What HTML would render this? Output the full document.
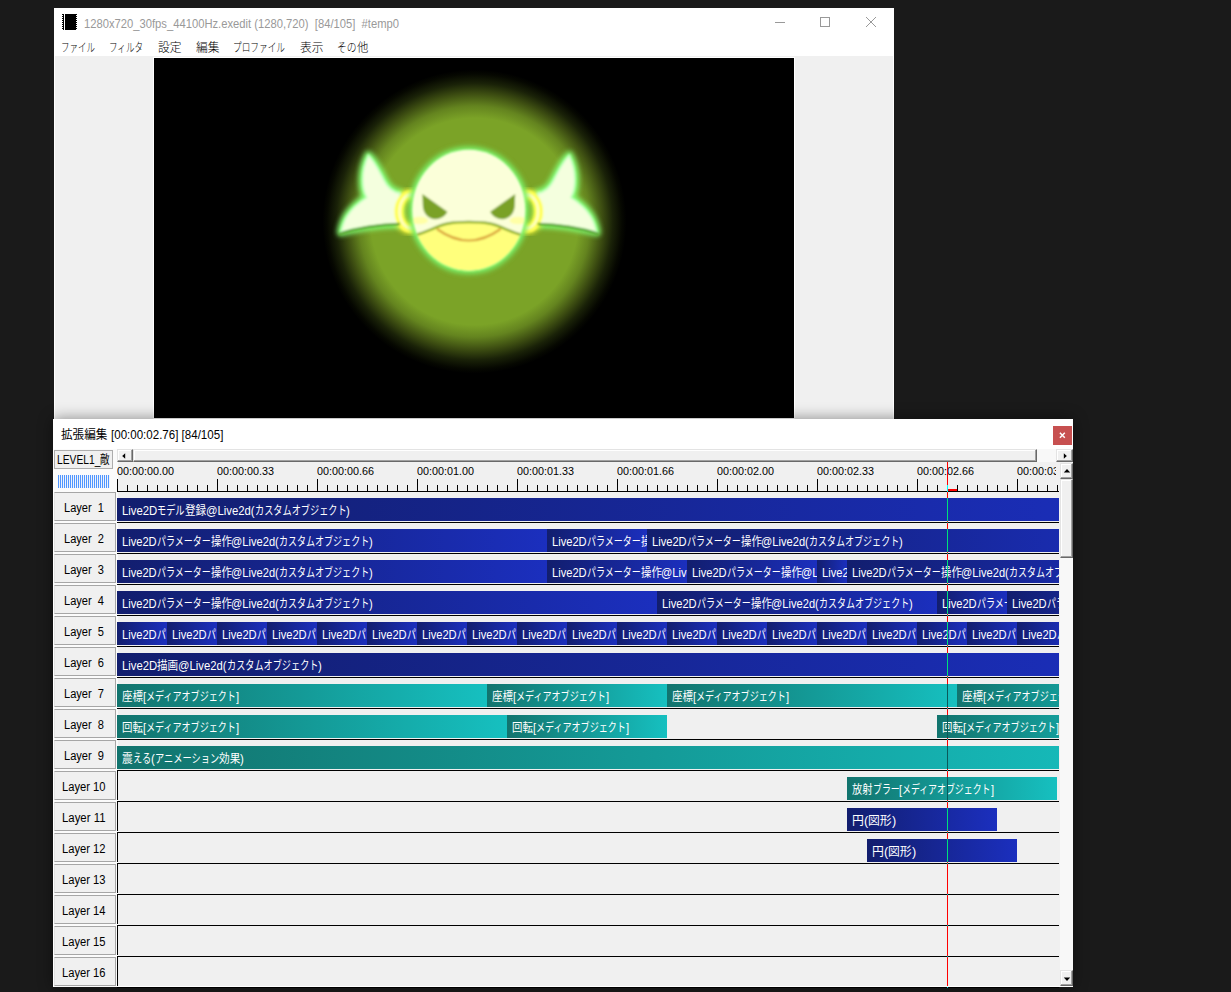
<!DOCTYPE html>
<html lang="ja"><head><meta charset="utf-8"><title>AviUtl</title>
<style>
html,body{margin:0;padding:0}
body{width:1231px;height:992px;background:#1a1a1a;position:relative;overflow:hidden;
 font-family:"Liberation Sans","Noto Sans CJK JP",sans-serif;font-size:12px;color:#000}
div,span,svg{position:absolute;box-sizing:border-box}
.fit{position:relative;display:inline-block;transform-origin:0 50%;white-space:pre}
.t{white-space:pre;line-height:16px;height:16px}
#w1{left:54px;top:8px;width:840px;height:420px;background:#f0f0f0;border-left:1px solid #fff;border-right:1px solid #fff}
#w1 .cap{left:0;top:0;width:840px;height:48px;background:#fff}
#w1 .title{left:30px;top:8px;color:#999}
.menu{top:32px;color:#000;font-weight:300}
#vid{left:100px;top:50px;width:640px;height:360px;background:#000;overflow:hidden;box-shadow:0 0 0 1px #fff}
#w2{left:53px;top:419px;width:1020px;height:568px;background:#fff;box-shadow:0 0 14px rgba(0,0,0,.45)}
#w2 .body{left:1px;top:30px;width:1019px;height:537px;background:#f0f0f0}
#w2 .title{left:8px;top:8px}
#close{left:1000px;top:7px;width:19px;height:19px;background:#c75050}
.lbl{left:1px;width:62px;height:29px;background:#f0f0f0;border:1px solid #a6a6a6;border-left-color:#e3e3e3;text-align:center}
.lbl .t{left:-1px;width:60px;top:7px;text-align:center}
.lcol{left:1px;top:30px;width:64px;height:538px;background:#fbfbfb}
.btn3{background:#f0f0f0;border:1px solid;border-color:#e3e3e3 #696969 #696969 #e3e3e3;box-shadow:inset -1px -1px 0 #a0a0a0, inset 1px 1px 0 #fff}
.chk{background:#f8f8f8}
.row{left:64px;width:942px;height:31px}
.sep{left:0;top:30px;width:942px;height:1px;background:#000}
.obj{top:6px;height:23px;overflow:hidden;color:#fff}
.obj .t{left:5px;top:5px}
.b{background:linear-gradient(90deg,#121e6e,#1b2fbe)}
.g{background:linear-gradient(90deg,#12746e,#16c0c0)}
.tick{width:1px;background:#000}
.tl{top:46px;font-size:11px}
</style></head><body>

<div id="w1"><div id="w1i" style="left:-1px;top:0;width:840px;height:420px"><div class="cap"></div>
<svg style="left:8px;top:6px" width="15" height="16" viewBox="0 0 15 16"><rect x="0" y="0" width="2" height="16" fill="#000"/><rect x="3" y="0" width="12" height="16" fill="#000"/><rect x="0" y="1" width="1" height="1" fill="#fff"/><rect x="14" y="1" width="1" height="1" fill="#fff"/><rect x="0" y="3" width="1" height="1" fill="#fff"/><rect x="14" y="3" width="1" height="1" fill="#fff"/><rect x="0" y="5" width="1" height="1" fill="#fff"/><rect x="14" y="5" width="1" height="1" fill="#fff"/><rect x="0" y="7" width="1" height="1" fill="#fff"/><rect x="14" y="7" width="1" height="1" fill="#fff"/><rect x="0" y="9" width="1" height="1" fill="#fff"/><rect x="14" y="9" width="1" height="1" fill="#fff"/><rect x="0" y="11" width="1" height="1" fill="#fff"/><rect x="14" y="11" width="1" height="1" fill="#fff"/><rect x="0" y="13" width="1" height="1" fill="#fff"/><rect x="14" y="13" width="1" height="1" fill="#fff"/><rect x="0" y="15" width="1" height="1" fill="#fff"/><rect x="14" y="15" width="1" height="1" fill="#fff"/></svg>
<div class="t title"><span class="fit" id="f1" style="transform:scaleX(0.9349);margin-right:-21.92px">1280x720_30fps_44100Hz.exedit (1280,720)  [84/105]  #temp0</span></div>
<svg style="left:700px;top:0" width="140" height="48" viewBox="754 8 140 48" fill="none" stroke="#999" stroke-width="1"><path d="M775 22.5H785"/><rect x="820.5" y="17.5" width="9" height="9"/><path d="M866 17L876 27M876 17L866 27"/></svg>
<div class="t menu" style="left:7.0px"><span class="fit" id="f2" style="transform:scaleX(0.7081);margin-right:-14.02px">ファイル</span></div>
<div class="t menu" style="left:55.0px"><span class="fit" id="f3" style="transform:scaleX(0.7118);margin-right:-13.77px">フィルタ</span></div>
<div class="t menu" style="left:103.5px"><span class="fit" id="f4" style="transform:scaleX(0.9785);margin-right:-0.52px">設定</span></div>
<div class="t menu" style="left:141.5px"><span class="fit" id="f5" style="transform:scaleX(0.9785);margin-right:-0.52px">編集</span></div>
<div class="t menu" style="left:179.0px"><span class="fit" id="f6" style="transform:scaleX(0.7221);margin-right:-20.02px">プロファイル</span></div>
<div class="t menu" style="left:245.5px"><span class="fit" id="f7" style="transform:scaleX(0.9785);margin-right:-0.52px">表示</span></div>
<div class="t menu" style="left:283.0px"><span class="fit" id="f8" style="transform:scaleX(0.8182);margin-right:-4.36px">その</span><span class="fit" id="f9" style="transform:scaleX(0.9446);margin-right:-0.67px">他</span></div>
<div id="vid">
<svg style="left:0;top:0" width="640" height="360" viewBox="154 58 640 360">
<defs>
<radialGradient id="glow" cx="474.5" cy="221.5" r="152" gradientUnits="userSpaceOnUse">
<stop offset="0" stop-color="#7ba327"/><stop offset="0.68" stop-color="#7ba327"/><stop offset="0.76" stop-color="#64841f"/>
<stop offset="0.84" stop-color="#3e4f12"/><stop offset="0.91" stop-color="#1a2208"/><stop offset="0.97" stop-color="#060801"/><stop offset="1" stop-color="#000"/>
</radialGradient>
<filter id="bl" x="-20%" y="-20%" width="140%" height="140%"><feGaussianBlur stdDeviation="2.4"/></filter>
<filter id="bs" x="-20%" y="-20%" width="140%" height="140%"><feGaussianBlur stdDeviation="1.2"/></filter>
<clipPath id="fc"><ellipse cx="468.8" cy="210.2" rx="56.5" ry="60.5"/></clipPath>
<path id="wing" d="M368.4,155.5 C374,160 380,172 384,180 C388,188 393,192 400,193 L400,224 C380,224 360,227 341,232 C343,222 347,210 366.5,197.5 C362,190 360,172 368.4,155.5Z"/>
<path id="eye" d="M422.4,194 L447.4,211.8 C445,216.5 440,219.2 435.5,219.2 C428,219.2 422.8,213 422.8,205Z"/>
</defs>
<rect x="154" y="58" width="640" height="360" fill="#000"/>
<circle cx="474.5" cy="221.5" r="152" fill="url(#glow)"/>
<g filter="url(#bl)" fill="#84ff78" stroke="#84ff78" stroke-width="8" stroke-linejoin="round">
<use href="#wing"/><use href="#wing" transform="translate(937.6,0) scale(-1,1)"/>
</g>
<g filter="url(#bl)" fill="none" stroke="#f6f63c" stroke-width="11">
<ellipse cx="410.5" cy="211.5" rx="12" ry="17"/><ellipse cx="527.1" cy="211.5" rx="12" ry="17"/>
</g>
<g filter="url(#bs)">
<g fill="#f4ffde" stroke="#c4ffbe" stroke-width="2"><use href="#wing"/><use href="#wing" transform="translate(937.6,0) scale(-1,1)"/></g>
<g fill="none" stroke="#ffff58" stroke-width="8"><ellipse cx="410.5" cy="211.5" rx="12" ry="17"/><ellipse cx="527.1" cy="211.5" rx="12" ry="17"/></g><g fill="none" stroke="#ffffc8" stroke-width="2.5"><ellipse cx="410.5" cy="211.5" rx="11" ry="16.5"/><ellipse cx="527.1" cy="211.5" rx="11" ry="16.5"/></g>
<path d="M339,234 C360,227 380,224.5 400,224" stroke="#58a02a" stroke-width="2.4" fill="none"/>
<path d="M598.6,234 C577.6,227 557.6,224.5 537.6,224" stroke="#58a02a" stroke-width="2.4" fill="none"/>
</g>
<ellipse cx="468.8" cy="210.2" rx="58.5" ry="62" fill="#84ff78" stroke="#78e860" stroke-width="4" filter="url(#bl)"/>
<g filter="url(#bs)">
<ellipse cx="468.8" cy="210.2" rx="56.5" ry="60.5" fill="#fbffd9"/>
<g clip-path="url(#fc)">
<path d="M405,237 C425,235 433,226.5 448,223.5 C455,222.3 462,222 468.8,222 C475.6,222 482.6,222.3 489.6,223.5 C504.6,226.5 512.6,235 532.6,237 L532.6,280 L405,280Z" fill="#ffff7c"/>
<ellipse cx="419.5" cy="220.5" rx="8.5" ry="3.8" fill="#ffffa6"/><ellipse cx="518.1" cy="220.5" rx="8.5" ry="3.8" fill="#ffffa6"/>
<path d="M437,229 Q468.8,252 500.6,229" fill="none" stroke="#d9a23a" stroke-width="2.2"/>
<path d="M405,237 C425,235 433,226.5 448,223.5 C455,222.3 462,222 468.8,222 C475.6,222 482.6,222.3 489.6,223.5 C504.6,226.5 512.6,235 532.6,237" fill="none" stroke="#8fb025" stroke-width="2.6"/>
</g>
<g fill="#7aa126"><use href="#eye"/><use href="#eye" transform="translate(937.6,0) scale(-1,1)"/></g>
</g>
</svg>

</div></div></div>
<div id="w2"><div class="body"></div>
<div class="t title"><span class="fit" id="f10" style="transform:scaleX(0.9671);margin-right:-1.69px">拡張編集 </span><span class="fit" id="f11" style="transform:scaleX(0.9621);margin-right:-4.42px">[00:00:02.76] [84/105]</span></div>
<div id="close"><svg style="left:0;top:0" width="19" height="19" viewBox="0 0 19 19"><path d="M6.9 6.8L11.8 11.7M11.8 6.8L6.9 11.7" stroke="#fff" stroke-width="1.5" fill="none"/></svg></div>
<div class="lcol"></div>
<div style="left:1px;top:31px;width:59px;height:19px;background:#f0f0f0;border:1px solid #adadad"><div class="t" style="left:2px;top:1px"><span class="fit" id="f12" style="transform:scaleX(0.8555);margin-right:-7.33px">LEVEL1_</span><span class="fit" id="f13" style="transform:scaleX(0.7997);margin-right:-2.41px">敵</span></div></div>
<div style="left:5px;top:56px;width:52px;height:13px;background:repeating-linear-gradient(90deg,#4f95ff 0,#4f95ff 1px,#eef3fb 1px,#eef3fb 2px)"></div>
<div class="lbl" style="top:73px"><div class="t"><span class="fit" id="f14" style="transform:scaleX(0.9225);margin-right:-3.36px">Layer  1</span></div></div>
<div class="lbl" style="top:104px"><div class="t"><span class="fit" id="f15" style="transform:scaleX(0.9225);margin-right:-3.36px">Layer  2</span></div></div>
<div class="lbl" style="top:135px"><div class="t"><span class="fit" id="f16" style="transform:scaleX(0.9225);margin-right:-3.36px">Layer  3</span></div></div>
<div class="lbl" style="top:166px"><div class="t"><span class="fit" id="f17" style="transform:scaleX(0.9225);margin-right:-3.36px">Layer  4</span></div></div>
<div class="lbl" style="top:197px"><div class="t"><span class="fit" id="f18" style="transform:scaleX(0.9225);margin-right:-3.36px">Layer  5</span></div></div>
<div class="lbl" style="top:228px"><div class="t"><span class="fit" id="f19" style="transform:scaleX(0.9225);margin-right:-3.36px">Layer  6</span></div></div>
<div class="lbl" style="top:259px"><div class="t"><span class="fit" id="f20" style="transform:scaleX(0.9225);margin-right:-3.36px">Layer  7</span></div></div>
<div class="lbl" style="top:290px"><div class="t"><span class="fit" id="f21" style="transform:scaleX(0.9225);margin-right:-3.36px">Layer  8</span></div></div>
<div class="lbl" style="top:321px"><div class="t"><span class="fit" id="f22" style="transform:scaleX(0.9225);margin-right:-3.36px">Layer  9</span></div></div>
<div class="lbl" style="top:352px"><div class="t"><span class="fit" id="f23" style="transform:scaleX(0.9314);margin-right:-3.20px">Layer 10</span></div></div>
<div class="lbl" style="top:383px"><div class="t"><span class="fit" id="f24" style="transform:scaleX(0.9495);margin-right:-2.31px">Layer 11</span></div></div>
<div class="lbl" style="top:414px"><div class="t"><span class="fit" id="f25" style="transform:scaleX(0.9314);margin-right:-3.20px">Layer 12</span></div></div>
<div class="lbl" style="top:445px"><div class="t"><span class="fit" id="f26" style="transform:scaleX(0.9314);margin-right:-3.20px">Layer 13</span></div></div>
<div class="lbl" style="top:476px"><div class="t"><span class="fit" id="f27" style="transform:scaleX(0.9314);margin-right:-3.20px">Layer 14</span></div></div>
<div class="lbl" style="top:507px"><div class="t"><span class="fit" id="f28" style="transform:scaleX(0.9314);margin-right:-3.20px">Layer 15</span></div></div>
<div class="lbl" style="top:538px"><div class="t"><span class="fit" id="f29" style="transform:scaleX(0.9314);margin-right:-3.20px">Layer 16</span></div></div>
<div class="chk" style="left:64px;top:30px;width:956px;height:13px"></div>
<div class="btn3" style="left:64px;top:30px;width:16px;height:13px"><svg style="left:3px;top:2px" width="6" height="8" viewBox="0 0 6 8"><path d="M1.2 4L4.2 1.2V6.8Z" fill="#000"/></svg></div>
<div class="btn3" style="left:80px;top:30px;width:904px;height:13px"></div>
<div class="btn3" style="left:1003px;top:30px;width:17px;height:13px"><svg style="left:5px;top:2px" width="6" height="8" viewBox="0 0 6 8"><path d="M4.8 4L1.8 1.2V6.8Z" fill="#000"/></svg></div>
<div class="chk" style="left:1007px;top:44px;width:13px;height:523px"></div>
<div class="btn3" style="left:1007px;top:44px;width:13px;height:16px"><svg style="left:2px;top:4px" width="8" height="6" viewBox="0 0 8 6"><path d="M4 1L7.2 4.5H0.8Z" fill="#000"/></svg></div>
<div class="btn3" style="left:1007px;top:60px;width:13px;height:79px"></div>
<div class="btn3" style="left:1007px;top:551px;width:13px;height:16px"><svg style="left:2px;top:5px" width="8" height="6" viewBox="0 0 8 6"><path d="M4 5L7.2 1.5H0.8Z" fill="#000"/></svg></div>
<div style="left:64px;top:43px;width:942px;height:30px;overflow:hidden">
<div style="left:0;top:29px;width:942px;height:1px;background:#000"></div>
<div class="tick" style="left:0px;top:17px;height:12px"></div>
<div class="tick" style="left:10px;top:23px;height:6px"></div>
<div class="tick" style="left:20px;top:23px;height:6px"></div>
<div class="tick" style="left:30px;top:23px;height:6px"></div>
<div class="tick" style="left:40px;top:23px;height:6px"></div>
<div class="tick" style="left:50px;top:23px;height:6px"></div>
<div class="tick" style="left:60px;top:23px;height:6px"></div>
<div class="tick" style="left:70px;top:23px;height:6px"></div>
<div class="tick" style="left:80px;top:23px;height:6px"></div>
<div class="tick" style="left:90px;top:23px;height:6px"></div>
<div class="tick" style="left:100px;top:17px;height:12px"></div>
<div class="tick" style="left:110px;top:23px;height:6px"></div>
<div class="tick" style="left:120px;top:23px;height:6px"></div>
<div class="tick" style="left:130px;top:23px;height:6px"></div>
<div class="tick" style="left:140px;top:23px;height:6px"></div>
<div class="tick" style="left:150px;top:23px;height:6px"></div>
<div class="tick" style="left:160px;top:23px;height:6px"></div>
<div class="tick" style="left:170px;top:23px;height:6px"></div>
<div class="tick" style="left:180px;top:23px;height:6px"></div>
<div class="tick" style="left:190px;top:23px;height:6px"></div>
<div class="tick" style="left:200px;top:17px;height:12px"></div>
<div class="tick" style="left:210px;top:23px;height:6px"></div>
<div class="tick" style="left:220px;top:23px;height:6px"></div>
<div class="tick" style="left:230px;top:23px;height:6px"></div>
<div class="tick" style="left:240px;top:23px;height:6px"></div>
<div class="tick" style="left:250px;top:23px;height:6px"></div>
<div class="tick" style="left:260px;top:23px;height:6px"></div>
<div class="tick" style="left:270px;top:23px;height:6px"></div>
<div class="tick" style="left:280px;top:23px;height:6px"></div>
<div class="tick" style="left:290px;top:23px;height:6px"></div>
<div class="tick" style="left:300px;top:17px;height:12px"></div>
<div class="tick" style="left:310px;top:23px;height:6px"></div>
<div class="tick" style="left:320px;top:23px;height:6px"></div>
<div class="tick" style="left:330px;top:23px;height:6px"></div>
<div class="tick" style="left:340px;top:23px;height:6px"></div>
<div class="tick" style="left:350px;top:23px;height:6px"></div>
<div class="tick" style="left:360px;top:23px;height:6px"></div>
<div class="tick" style="left:370px;top:23px;height:6px"></div>
<div class="tick" style="left:380px;top:23px;height:6px"></div>
<div class="tick" style="left:390px;top:23px;height:6px"></div>
<div class="tick" style="left:400px;top:17px;height:12px"></div>
<div class="tick" style="left:410px;top:23px;height:6px"></div>
<div class="tick" style="left:420px;top:23px;height:6px"></div>
<div class="tick" style="left:430px;top:23px;height:6px"></div>
<div class="tick" style="left:440px;top:23px;height:6px"></div>
<div class="tick" style="left:450px;top:23px;height:6px"></div>
<div class="tick" style="left:460px;top:23px;height:6px"></div>
<div class="tick" style="left:470px;top:23px;height:6px"></div>
<div class="tick" style="left:480px;top:23px;height:6px"></div>
<div class="tick" style="left:490px;top:23px;height:6px"></div>
<div class="tick" style="left:500px;top:17px;height:12px"></div>
<div class="tick" style="left:510px;top:23px;height:6px"></div>
<div class="tick" style="left:520px;top:23px;height:6px"></div>
<div class="tick" style="left:530px;top:23px;height:6px"></div>
<div class="tick" style="left:540px;top:23px;height:6px"></div>
<div class="tick" style="left:550px;top:23px;height:6px"></div>
<div class="tick" style="left:560px;top:23px;height:6px"></div>
<div class="tick" style="left:570px;top:23px;height:6px"></div>
<div class="tick" style="left:580px;top:23px;height:6px"></div>
<div class="tick" style="left:590px;top:23px;height:6px"></div>
<div class="tick" style="left:600px;top:17px;height:12px"></div>
<div class="tick" style="left:610px;top:23px;height:6px"></div>
<div class="tick" style="left:620px;top:23px;height:6px"></div>
<div class="tick" style="left:630px;top:23px;height:6px"></div>
<div class="tick" style="left:640px;top:23px;height:6px"></div>
<div class="tick" style="left:650px;top:23px;height:6px"></div>
<div class="tick" style="left:660px;top:23px;height:6px"></div>
<div class="tick" style="left:670px;top:23px;height:6px"></div>
<div class="tick" style="left:680px;top:23px;height:6px"></div>
<div class="tick" style="left:690px;top:23px;height:6px"></div>
<div class="tick" style="left:700px;top:17px;height:12px"></div>
<div class="tick" style="left:710px;top:23px;height:6px"></div>
<div class="tick" style="left:720px;top:23px;height:6px"></div>
<div class="tick" style="left:730px;top:23px;height:6px"></div>
<div class="tick" style="left:740px;top:23px;height:6px"></div>
<div class="tick" style="left:750px;top:23px;height:6px"></div>
<div class="tick" style="left:760px;top:23px;height:6px"></div>
<div class="tick" style="left:770px;top:23px;height:6px"></div>
<div class="tick" style="left:780px;top:23px;height:6px"></div>
<div class="tick" style="left:790px;top:23px;height:6px"></div>
<div class="tick" style="left:800px;top:17px;height:12px"></div>
<div class="tick" style="left:810px;top:23px;height:6px"></div>
<div class="tick" style="left:820px;top:23px;height:6px"></div>
<div class="tick" style="left:830px;top:23px;height:6px"></div>
<div class="tick" style="left:840px;top:23px;height:6px"></div>
<div class="tick" style="left:850px;top:23px;height:6px"></div>
<div class="tick" style="left:860px;top:23px;height:6px"></div>
<div class="tick" style="left:870px;top:23px;height:6px"></div>
<div class="tick" style="left:880px;top:23px;height:6px"></div>
<div class="tick" style="left:890px;top:23px;height:6px"></div>
<div class="tick" style="left:900px;top:17px;height:12px"></div>
<div class="tick" style="left:910px;top:23px;height:6px"></div>
<div class="tick" style="left:920px;top:23px;height:6px"></div>
<div class="tick" style="left:930px;top:23px;height:6px"></div>
<div class="tick" style="left:940px;top:23px;height:6px"></div>
<div class="t" style="left:0px;top:1px;font-size:11px;width:70px;overflow:hidden"><span class="fit" id="f30" style="transform:scaleX(0.9806);margin-right:-1.12px">00:00:00.00</span></div>
<div class="t" style="left:100px;top:1px;font-size:11px;width:70px;overflow:hidden"><span class="fit" id="f31" style="transform:scaleX(0.9806);margin-right:-1.12px">00:00:00.33</span></div>
<div class="t" style="left:200px;top:1px;font-size:11px;width:70px;overflow:hidden"><span class="fit" id="f32" style="transform:scaleX(0.9806);margin-right:-1.12px">00:00:00.66</span></div>
<div class="t" style="left:300px;top:1px;font-size:11px;width:70px;overflow:hidden"><span class="fit" id="f33" style="transform:scaleX(0.9806);margin-right:-1.12px">00:00:01.00</span></div>
<div class="t" style="left:400px;top:1px;font-size:11px;width:70px;overflow:hidden"><span class="fit" id="f34" style="transform:scaleX(0.9806);margin-right:-1.12px">00:00:01.33</span></div>
<div class="t" style="left:500px;top:1px;font-size:11px;width:70px;overflow:hidden"><span class="fit" id="f35" style="transform:scaleX(0.9806);margin-right:-1.12px">00:00:01.66</span></div>
<div class="t" style="left:600px;top:1px;font-size:11px;width:70px;overflow:hidden"><span class="fit" id="f36" style="transform:scaleX(0.9806);margin-right:-1.12px">00:00:02.00</span></div>
<div class="t" style="left:700px;top:1px;font-size:11px;width:70px;overflow:hidden"><span class="fit" id="f37" style="transform:scaleX(0.9806);margin-right:-1.12px">00:00:02.33</span></div>
<div class="t" style="left:800px;top:1px;font-size:11px;width:70px;overflow:hidden"><span class="fit" id="f38" style="transform:scaleX(0.9806);margin-right:-1.12px">00:00:02.66</span></div>
<div class="t" style="left:900px;top:1px;font-size:11px;width:39px;overflow:hidden"><span class="fit" id="f39" style="transform:scaleX(0.9806);margin-right:-1.12px">00:00:03.00</span></div>
</div>
<div class="row" style="top:73px;overflow:hidden">
<div class="sep"></div>
<div class="obj b" style="left:0px;width:1050px"><div class="t"><span class="fit" id="f40" style="transform:scaleX(0.9433);margin-right:-2.12px">Live2D</span><span class="fit" id="f41" style="transform:scaleX(0.7639);margin-right:-8.50px">モデル</span><span class="fit" id="f42" style="transform:scaleX(0.8818);margin-right:-2.84px">登録</span><span class="fit" id="f43" style="transform:scaleX(0.9433);margin-right:-2.92px">@Live2d(</span><span class="fit" id="f44" style="transform:scaleX(0.7639);margin-right:-28.34px">カスタムオブジェクト</span><span class="fit" id="f45" style="transform:scaleX(0.9433);margin-right:-0.23px">)</span></div></div>
</div>
<div class="row" style="top:104px;overflow:hidden">
<div class="sep"></div>
<div class="obj b" style="left:0px;width:430px"><div class="t"><span class="fit" id="f46" style="transform:scaleX(0.9277);margin-right:-2.70px">Live2D</span><span class="fit" id="f47" style="transform:scaleX(0.7513);margin-right:-17.82px">パラメーター</span><span class="fit" id="f48" style="transform:scaleX(0.8672);margin-right:-3.19px">操作</span><span class="fit" id="f49" style="transform:scaleX(0.9277);margin-right:-3.73px">@Live2d(</span><span class="fit" id="f50" style="transform:scaleX(0.7513);margin-right:-29.85px">カスタムオブジェクト</span><span class="fit" id="f51" style="transform:scaleX(0.9277);margin-right:-0.29px">)</span></div></div>
<div class="obj b" style="left:430px;width:100px"><div class="t"><span class="fit" id="f52" style="transform:scaleX(0.9277);margin-right:-2.70px">Live2D</span><span class="fit" id="f53" style="transform:scaleX(0.7513);margin-right:-17.82px">パラメーター</span><span class="fit" id="f54" style="transform:scaleX(0.8672);margin-right:-3.19px">操作</span><span class="fit" id="f55" style="transform:scaleX(0.9277);margin-right:-3.73px">@Live2d(</span><span class="fit" id="f56" style="transform:scaleX(0.7513);margin-right:-29.85px">カスタムオブジェクト</span><span class="fit" id="f57" style="transform:scaleX(0.9277);margin-right:-0.29px">)</span></div></div>
<div class="obj b" style="left:530px;width:520px"><div class="t"><span class="fit" id="f58" style="transform:scaleX(0.9277);margin-right:-2.70px">Live2D</span><span class="fit" id="f59" style="transform:scaleX(0.7513);margin-right:-17.82px">パラメーター</span><span class="fit" id="f60" style="transform:scaleX(0.8672);margin-right:-3.19px">操作</span><span class="fit" id="f61" style="transform:scaleX(0.9277);margin-right:-3.73px">@Live2d(</span><span class="fit" id="f62" style="transform:scaleX(0.7513);margin-right:-29.85px">カスタムオブジェクト</span><span class="fit" id="f63" style="transform:scaleX(0.9277);margin-right:-0.29px">)</span></div></div>
</div>
<div class="row" style="top:135px;overflow:hidden">
<div class="sep"></div>
<div class="obj b" style="left:0px;width:430px"><div class="t"><span class="fit" id="f64" style="transform:scaleX(0.9277);margin-right:-2.70px">Live2D</span><span class="fit" id="f65" style="transform:scaleX(0.7513);margin-right:-17.82px">パラメーター</span><span class="fit" id="f66" style="transform:scaleX(0.8672);margin-right:-3.19px">操作</span><span class="fit" id="f67" style="transform:scaleX(0.9277);margin-right:-3.73px">@Live2d(</span><span class="fit" id="f68" style="transform:scaleX(0.7513);margin-right:-29.85px">カスタムオブジェクト</span><span class="fit" id="f69" style="transform:scaleX(0.9277);margin-right:-0.29px">)</span></div></div>
<div class="obj b" style="left:430px;width:140px"><div class="t"><span class="fit" id="f70" style="transform:scaleX(0.9277);margin-right:-2.70px">Live2D</span><span class="fit" id="f71" style="transform:scaleX(0.7513);margin-right:-17.82px">パラメーター</span><span class="fit" id="f72" style="transform:scaleX(0.8672);margin-right:-3.19px">操作</span><span class="fit" id="f73" style="transform:scaleX(0.9277);margin-right:-3.73px">@Live2d(</span><span class="fit" id="f74" style="transform:scaleX(0.7513);margin-right:-29.85px">カスタムオブジェクト</span><span class="fit" id="f75" style="transform:scaleX(0.9277);margin-right:-0.29px">)</span></div></div>
<div class="obj b" style="left:570px;width:130px"><div class="t"><span class="fit" id="f76" style="transform:scaleX(0.9277);margin-right:-2.70px">Live2D</span><span class="fit" id="f77" style="transform:scaleX(0.7513);margin-right:-17.82px">パラメーター</span><span class="fit" id="f78" style="transform:scaleX(0.8672);margin-right:-3.19px">操作</span><span class="fit" id="f79" style="transform:scaleX(0.9277);margin-right:-3.73px">@Live2d(</span><span class="fit" id="f80" style="transform:scaleX(0.7513);margin-right:-29.85px">カスタムオブジェクト</span><span class="fit" id="f81" style="transform:scaleX(0.9277);margin-right:-0.29px">)</span></div></div>
<div class="obj b" style="left:700px;width:30px"><div class="t"><span class="fit" id="f82" style="transform:scaleX(0.9277);margin-right:-2.70px">Live2D</span><span class="fit" id="f83" style="transform:scaleX(0.7513);margin-right:-17.82px">パラメーター</span><span class="fit" id="f84" style="transform:scaleX(0.8672);margin-right:-3.19px">操作</span><span class="fit" id="f85" style="transform:scaleX(0.9277);margin-right:-3.73px">@Live2d(</span><span class="fit" id="f86" style="transform:scaleX(0.7513);margin-right:-29.85px">カスタムオブジェクト</span><span class="fit" id="f87" style="transform:scaleX(0.9277);margin-right:-0.29px">)</span></div></div>
<div class="obj b" style="left:730px;width:320px"><div class="t"><span class="fit" id="f88" style="transform:scaleX(0.9277);margin-right:-2.70px">Live2D</span><span class="fit" id="f89" style="transform:scaleX(0.7513);margin-right:-17.82px">パラメーター</span><span class="fit" id="f90" style="transform:scaleX(0.8672);margin-right:-3.19px">操作</span><span class="fit" id="f91" style="transform:scaleX(0.9277);margin-right:-3.73px">@Live2d(</span><span class="fit" id="f92" style="transform:scaleX(0.7513);margin-right:-29.85px">カスタムオブジェクト</span><span class="fit" id="f93" style="transform:scaleX(0.9277);margin-right:-0.29px">)</span></div></div>
</div>
<div class="row" style="top:166px;overflow:hidden">
<div class="sep"></div>
<div class="obj b" style="left:0px;width:540px"><div class="t"><span class="fit" id="f94" style="transform:scaleX(0.9277);margin-right:-2.70px">Live2D</span><span class="fit" id="f95" style="transform:scaleX(0.7513);margin-right:-17.82px">パラメーター</span><span class="fit" id="f96" style="transform:scaleX(0.8672);margin-right:-3.19px">操作</span><span class="fit" id="f97" style="transform:scaleX(0.9277);margin-right:-3.73px">@Live2d(</span><span class="fit" id="f98" style="transform:scaleX(0.7513);margin-right:-29.85px">カスタムオブジェクト</span><span class="fit" id="f99" style="transform:scaleX(0.9277);margin-right:-0.29px">)</span></div></div>
<div class="obj b" style="left:540px;width:280px"><div class="t"><span class="fit" id="f100" style="transform:scaleX(0.9277);margin-right:-2.70px">Live2D</span><span class="fit" id="f101" style="transform:scaleX(0.7513);margin-right:-17.82px">パラメーター</span><span class="fit" id="f102" style="transform:scaleX(0.8672);margin-right:-3.19px">操作</span><span class="fit" id="f103" style="transform:scaleX(0.9277);margin-right:-3.73px">@Live2d(</span><span class="fit" id="f104" style="transform:scaleX(0.7513);margin-right:-29.85px">カスタムオブジェクト</span><span class="fit" id="f105" style="transform:scaleX(0.9277);margin-right:-0.29px">)</span></div></div>
<div class="obj b" style="left:820px;width:70px"><div class="t"><span class="fit" id="f106" style="transform:scaleX(0.9277);margin-right:-2.70px">Live2D</span><span class="fit" id="f107" style="transform:scaleX(0.7513);margin-right:-17.82px">パラメーター</span><span class="fit" id="f108" style="transform:scaleX(0.8672);margin-right:-3.19px">操作</span><span class="fit" id="f109" style="transform:scaleX(0.9277);margin-right:-3.73px">@Live2d(</span><span class="fit" id="f110" style="transform:scaleX(0.7513);margin-right:-29.85px">カスタムオブジェクト</span><span class="fit" id="f111" style="transform:scaleX(0.9277);margin-right:-0.29px">)</span></div></div>
<div class="obj b" style="left:890px;width:160px"><div class="t"><span class="fit" id="f112" style="transform:scaleX(0.9277);margin-right:-2.70px">Live2D</span><span class="fit" id="f113" style="transform:scaleX(0.7513);margin-right:-17.82px">パラメーター</span><span class="fit" id="f114" style="transform:scaleX(0.8672);margin-right:-3.19px">操作</span><span class="fit" id="f115" style="transform:scaleX(0.9277);margin-right:-3.73px">@Live2d(</span><span class="fit" id="f116" style="transform:scaleX(0.7513);margin-right:-29.85px">カスタムオブジェクト</span><span class="fit" id="f117" style="transform:scaleX(0.9277);margin-right:-0.29px">)</span></div></div>
</div>
<div class="row" style="top:197px;overflow:hidden">
<div class="sep"></div>
<div class="obj b" style="left:0px;width:50px"><div class="t"><span class="fit" id="f118" style="transform:scaleX(0.9277);margin-right:-2.70px">Live2D</span><span class="fit" id="f119" style="transform:scaleX(0.7513);margin-right:-17.82px">パラメーター</span><span class="fit" id="f120" style="transform:scaleX(0.8672);margin-right:-3.19px">操作</span><span class="fit" id="f121" style="transform:scaleX(0.9277);margin-right:-3.73px">@Live2d(</span><span class="fit" id="f122" style="transform:scaleX(0.7513);margin-right:-29.85px">カスタムオブジェクト</span><span class="fit" id="f123" style="transform:scaleX(0.9277);margin-right:-0.29px">)</span></div></div>
<div class="obj b" style="left:50px;width:50px"><div class="t"><span class="fit" id="f124" style="transform:scaleX(0.9277);margin-right:-2.70px">Live2D</span><span class="fit" id="f125" style="transform:scaleX(0.7513);margin-right:-17.82px">パラメーター</span><span class="fit" id="f126" style="transform:scaleX(0.8672);margin-right:-3.19px">操作</span><span class="fit" id="f127" style="transform:scaleX(0.9277);margin-right:-3.73px">@Live2d(</span><span class="fit" id="f128" style="transform:scaleX(0.7513);margin-right:-29.85px">カスタムオブジェクト</span><span class="fit" id="f129" style="transform:scaleX(0.9277);margin-right:-0.29px">)</span></div></div>
<div class="obj b" style="left:100px;width:50px"><div class="t"><span class="fit" id="f130" style="transform:scaleX(0.9277);margin-right:-2.70px">Live2D</span><span class="fit" id="f131" style="transform:scaleX(0.7513);margin-right:-17.82px">パラメーター</span><span class="fit" id="f132" style="transform:scaleX(0.8672);margin-right:-3.19px">操作</span><span class="fit" id="f133" style="transform:scaleX(0.9277);margin-right:-3.73px">@Live2d(</span><span class="fit" id="f134" style="transform:scaleX(0.7513);margin-right:-29.85px">カスタムオブジェクト</span><span class="fit" id="f135" style="transform:scaleX(0.9277);margin-right:-0.29px">)</span></div></div>
<div class="obj b" style="left:150px;width:50px"><div class="t"><span class="fit" id="f136" style="transform:scaleX(0.9277);margin-right:-2.70px">Live2D</span><span class="fit" id="f137" style="transform:scaleX(0.7513);margin-right:-17.82px">パラメーター</span><span class="fit" id="f138" style="transform:scaleX(0.8672);margin-right:-3.19px">操作</span><span class="fit" id="f139" style="transform:scaleX(0.9277);margin-right:-3.73px">@Live2d(</span><span class="fit" id="f140" style="transform:scaleX(0.7513);margin-right:-29.85px">カスタムオブジェクト</span><span class="fit" id="f141" style="transform:scaleX(0.9277);margin-right:-0.29px">)</span></div></div>
<div class="obj b" style="left:200px;width:50px"><div class="t"><span class="fit" id="f142" style="transform:scaleX(0.9277);margin-right:-2.70px">Live2D</span><span class="fit" id="f143" style="transform:scaleX(0.7513);margin-right:-17.82px">パラメーター</span><span class="fit" id="f144" style="transform:scaleX(0.8672);margin-right:-3.19px">操作</span><span class="fit" id="f145" style="transform:scaleX(0.9277);margin-right:-3.73px">@Live2d(</span><span class="fit" id="f146" style="transform:scaleX(0.7513);margin-right:-29.85px">カスタムオブジェクト</span><span class="fit" id="f147" style="transform:scaleX(0.9277);margin-right:-0.29px">)</span></div></div>
<div class="obj b" style="left:250px;width:50px"><div class="t"><span class="fit" id="f148" style="transform:scaleX(0.9277);margin-right:-2.70px">Live2D</span><span class="fit" id="f149" style="transform:scaleX(0.7513);margin-right:-17.82px">パラメーター</span><span class="fit" id="f150" style="transform:scaleX(0.8672);margin-right:-3.19px">操作</span><span class="fit" id="f151" style="transform:scaleX(0.9277);margin-right:-3.73px">@Live2d(</span><span class="fit" id="f152" style="transform:scaleX(0.7513);margin-right:-29.85px">カスタムオブジェクト</span><span class="fit" id="f153" style="transform:scaleX(0.9277);margin-right:-0.29px">)</span></div></div>
<div class="obj b" style="left:300px;width:50px"><div class="t"><span class="fit" id="f154" style="transform:scaleX(0.9277);margin-right:-2.70px">Live2D</span><span class="fit" id="f155" style="transform:scaleX(0.7513);margin-right:-17.82px">パラメーター</span><span class="fit" id="f156" style="transform:scaleX(0.8672);margin-right:-3.19px">操作</span><span class="fit" id="f157" style="transform:scaleX(0.9277);margin-right:-3.73px">@Live2d(</span><span class="fit" id="f158" style="transform:scaleX(0.7513);margin-right:-29.85px">カスタムオブジェクト</span><span class="fit" id="f159" style="transform:scaleX(0.9277);margin-right:-0.29px">)</span></div></div>
<div class="obj b" style="left:350px;width:50px"><div class="t"><span class="fit" id="f160" style="transform:scaleX(0.9277);margin-right:-2.70px">Live2D</span><span class="fit" id="f161" style="transform:scaleX(0.7513);margin-right:-17.82px">パラメーター</span><span class="fit" id="f162" style="transform:scaleX(0.8672);margin-right:-3.19px">操作</span><span class="fit" id="f163" style="transform:scaleX(0.9277);margin-right:-3.73px">@Live2d(</span><span class="fit" id="f164" style="transform:scaleX(0.7513);margin-right:-29.85px">カスタムオブジェクト</span><span class="fit" id="f165" style="transform:scaleX(0.9277);margin-right:-0.29px">)</span></div></div>
<div class="obj b" style="left:400px;width:50px"><div class="t"><span class="fit" id="f166" style="transform:scaleX(0.9277);margin-right:-2.70px">Live2D</span><span class="fit" id="f167" style="transform:scaleX(0.7513);margin-right:-17.82px">パラメーター</span><span class="fit" id="f168" style="transform:scaleX(0.8672);margin-right:-3.19px">操作</span><span class="fit" id="f169" style="transform:scaleX(0.9277);margin-right:-3.73px">@Live2d(</span><span class="fit" id="f170" style="transform:scaleX(0.7513);margin-right:-29.85px">カスタムオブジェクト</span><span class="fit" id="f171" style="transform:scaleX(0.9277);margin-right:-0.29px">)</span></div></div>
<div class="obj b" style="left:450px;width:50px"><div class="t"><span class="fit" id="f172" style="transform:scaleX(0.9277);margin-right:-2.70px">Live2D</span><span class="fit" id="f173" style="transform:scaleX(0.7513);margin-right:-17.82px">パラメーター</span><span class="fit" id="f174" style="transform:scaleX(0.8672);margin-right:-3.19px">操作</span><span class="fit" id="f175" style="transform:scaleX(0.9277);margin-right:-3.73px">@Live2d(</span><span class="fit" id="f176" style="transform:scaleX(0.7513);margin-right:-29.85px">カスタムオブジェクト</span><span class="fit" id="f177" style="transform:scaleX(0.9277);margin-right:-0.29px">)</span></div></div>
<div class="obj b" style="left:500px;width:50px"><div class="t"><span class="fit" id="f178" style="transform:scaleX(0.9277);margin-right:-2.70px">Live2D</span><span class="fit" id="f179" style="transform:scaleX(0.7513);margin-right:-17.82px">パラメーター</span><span class="fit" id="f180" style="transform:scaleX(0.8672);margin-right:-3.19px">操作</span><span class="fit" id="f181" style="transform:scaleX(0.9277);margin-right:-3.73px">@Live2d(</span><span class="fit" id="f182" style="transform:scaleX(0.7513);margin-right:-29.85px">カスタムオブジェクト</span><span class="fit" id="f183" style="transform:scaleX(0.9277);margin-right:-0.29px">)</span></div></div>
<div class="obj b" style="left:550px;width:50px"><div class="t"><span class="fit" id="f184" style="transform:scaleX(0.9277);margin-right:-2.70px">Live2D</span><span class="fit" id="f185" style="transform:scaleX(0.7513);margin-right:-17.82px">パラメーター</span><span class="fit" id="f186" style="transform:scaleX(0.8672);margin-right:-3.19px">操作</span><span class="fit" id="f187" style="transform:scaleX(0.9277);margin-right:-3.73px">@Live2d(</span><span class="fit" id="f188" style="transform:scaleX(0.7513);margin-right:-29.85px">カスタムオブジェクト</span><span class="fit" id="f189" style="transform:scaleX(0.9277);margin-right:-0.29px">)</span></div></div>
<div class="obj b" style="left:600px;width:50px"><div class="t"><span class="fit" id="f190" style="transform:scaleX(0.9277);margin-right:-2.70px">Live2D</span><span class="fit" id="f191" style="transform:scaleX(0.7513);margin-right:-17.82px">パラメーター</span><span class="fit" id="f192" style="transform:scaleX(0.8672);margin-right:-3.19px">操作</span><span class="fit" id="f193" style="transform:scaleX(0.9277);margin-right:-3.73px">@Live2d(</span><span class="fit" id="f194" style="transform:scaleX(0.7513);margin-right:-29.85px">カスタムオブジェクト</span><span class="fit" id="f195" style="transform:scaleX(0.9277);margin-right:-0.29px">)</span></div></div>
<div class="obj b" style="left:650px;width:50px"><div class="t"><span class="fit" id="f196" style="transform:scaleX(0.9277);margin-right:-2.70px">Live2D</span><span class="fit" id="f197" style="transform:scaleX(0.7513);margin-right:-17.82px">パラメーター</span><span class="fit" id="f198" style="transform:scaleX(0.8672);margin-right:-3.19px">操作</span><span class="fit" id="f199" style="transform:scaleX(0.9277);margin-right:-3.73px">@Live2d(</span><span class="fit" id="f200" style="transform:scaleX(0.7513);margin-right:-29.85px">カスタムオブジェクト</span><span class="fit" id="f201" style="transform:scaleX(0.9277);margin-right:-0.29px">)</span></div></div>
<div class="obj b" style="left:700px;width:50px"><div class="t"><span class="fit" id="f202" style="transform:scaleX(0.9277);margin-right:-2.70px">Live2D</span><span class="fit" id="f203" style="transform:scaleX(0.7513);margin-right:-17.82px">パラメーター</span><span class="fit" id="f204" style="transform:scaleX(0.8672);margin-right:-3.19px">操作</span><span class="fit" id="f205" style="transform:scaleX(0.9277);margin-right:-3.73px">@Live2d(</span><span class="fit" id="f206" style="transform:scaleX(0.7513);margin-right:-29.85px">カスタムオブジェクト</span><span class="fit" id="f207" style="transform:scaleX(0.9277);margin-right:-0.29px">)</span></div></div>
<div class="obj b" style="left:750px;width:50px"><div class="t"><span class="fit" id="f208" style="transform:scaleX(0.9277);margin-right:-2.70px">Live2D</span><span class="fit" id="f209" style="transform:scaleX(0.7513);margin-right:-17.82px">パラメーター</span><span class="fit" id="f210" style="transform:scaleX(0.8672);margin-right:-3.19px">操作</span><span class="fit" id="f211" style="transform:scaleX(0.9277);margin-right:-3.73px">@Live2d(</span><span class="fit" id="f212" style="transform:scaleX(0.7513);margin-right:-29.85px">カスタムオブジェクト</span><span class="fit" id="f213" style="transform:scaleX(0.9277);margin-right:-0.29px">)</span></div></div>
<div class="obj b" style="left:800px;width:50px"><div class="t"><span class="fit" id="f214" style="transform:scaleX(0.9277);margin-right:-2.70px">Live2D</span><span class="fit" id="f215" style="transform:scaleX(0.7513);margin-right:-17.82px">パラメーター</span><span class="fit" id="f216" style="transform:scaleX(0.8672);margin-right:-3.19px">操作</span><span class="fit" id="f217" style="transform:scaleX(0.9277);margin-right:-3.73px">@Live2d(</span><span class="fit" id="f218" style="transform:scaleX(0.7513);margin-right:-29.85px">カスタムオブジェクト</span><span class="fit" id="f219" style="transform:scaleX(0.9277);margin-right:-0.29px">)</span></div></div>
<div class="obj b" style="left:850px;width:50px"><div class="t"><span class="fit" id="f220" style="transform:scaleX(0.9277);margin-right:-2.70px">Live2D</span><span class="fit" id="f221" style="transform:scaleX(0.7513);margin-right:-17.82px">パラメーター</span><span class="fit" id="f222" style="transform:scaleX(0.8672);margin-right:-3.19px">操作</span><span class="fit" id="f223" style="transform:scaleX(0.9277);margin-right:-3.73px">@Live2d(</span><span class="fit" id="f224" style="transform:scaleX(0.7513);margin-right:-29.85px">カスタムオブジェクト</span><span class="fit" id="f225" style="transform:scaleX(0.9277);margin-right:-0.29px">)</span></div></div>
<div class="obj b" style="left:900px;width:50px"><div class="t"><span class="fit" id="f226" style="transform:scaleX(0.9277);margin-right:-2.70px">Live2D</span><span class="fit" id="f227" style="transform:scaleX(0.7513);margin-right:-17.82px">パラメーター</span><span class="fit" id="f228" style="transform:scaleX(0.8672);margin-right:-3.19px">操作</span><span class="fit" id="f229" style="transform:scaleX(0.9277);margin-right:-3.73px">@Live2d(</span><span class="fit" id="f230" style="transform:scaleX(0.7513);margin-right:-29.85px">カスタムオブジェクト</span><span class="fit" id="f231" style="transform:scaleX(0.9277);margin-right:-0.29px">)</span></div></div>
<div class="obj b" style="left:950px;width:50px"><div class="t"><span class="fit" id="f232" style="transform:scaleX(0.9277);margin-right:-2.70px">Live2D</span><span class="fit" id="f233" style="transform:scaleX(0.7513);margin-right:-17.82px">パラメーター</span><span class="fit" id="f234" style="transform:scaleX(0.8672);margin-right:-3.19px">操作</span><span class="fit" id="f235" style="transform:scaleX(0.9277);margin-right:-3.73px">@Live2d(</span><span class="fit" id="f236" style="transform:scaleX(0.7513);margin-right:-29.85px">カスタムオブジェクト</span><span class="fit" id="f237" style="transform:scaleX(0.9277);margin-right:-0.29px">)</span></div></div>
<div class="obj b" style="left:1000px;width:50px"><div class="t"><span class="fit" id="f238" style="transform:scaleX(0.9277);margin-right:-2.70px">Live2D</span><span class="fit" id="f239" style="transform:scaleX(0.7513);margin-right:-17.82px">パラメーター</span><span class="fit" id="f240" style="transform:scaleX(0.8672);margin-right:-3.19px">操作</span><span class="fit" id="f241" style="transform:scaleX(0.9277);margin-right:-3.73px">@Live2d(</span><span class="fit" id="f242" style="transform:scaleX(0.7513);margin-right:-29.85px">カスタムオブジェクト</span><span class="fit" id="f243" style="transform:scaleX(0.9277);margin-right:-0.29px">)</span></div></div>
</div>
<div class="row" style="top:228px;overflow:hidden">
<div class="sep"></div>
<div class="obj b" style="left:0px;width:1050px"><div class="t"><span class="fit" id="f244" style="transform:scaleX(0.9410);margin-right:-2.20px">Live2D</span><span class="fit" id="f245" style="transform:scaleX(0.8796);margin-right:-2.89px">描画</span><span class="fit" id="f246" style="transform:scaleX(0.9410);margin-right:-3.04px">@Live2d(</span><span class="fit" id="f247" style="transform:scaleX(0.7620);margin-right:-28.56px">カスタムオブジェクト</span><span class="fit" id="f248" style="transform:scaleX(0.9410);margin-right:-0.24px">)</span></div></div>
</div>
<div class="row" style="top:259px;overflow:hidden">
<div class="sep"></div>
<div class="obj g" style="left:0px;width:370px"><div class="t"><span class="fit" id="f249" style="transform:scaleX(0.8705);margin-right:-3.11px">座標</span><span class="fit" id="f250" style="transform:scaleX(0.9312);margin-right:-0.23px">[</span><span class="fit" id="f251" style="transform:scaleX(0.7541);margin-right:-29.31px">メディアオブジェクト</span><span class="fit" id="f252" style="transform:scaleX(0.9312);margin-right:-0.23px">]</span></div></div>
<div class="obj g" style="left:370px;width:180px"><div class="t"><span class="fit" id="f253" style="transform:scaleX(0.8705);margin-right:-3.11px">座標</span><span class="fit" id="f254" style="transform:scaleX(0.9312);margin-right:-0.23px">[</span><span class="fit" id="f255" style="transform:scaleX(0.7541);margin-right:-29.31px">メディアオブジェクト</span><span class="fit" id="f256" style="transform:scaleX(0.9312);margin-right:-0.23px">]</span></div></div>
<div class="obj g" style="left:550px;width:290px"><div class="t"><span class="fit" id="f257" style="transform:scaleX(0.8705);margin-right:-3.11px">座標</span><span class="fit" id="f258" style="transform:scaleX(0.9312);margin-right:-0.23px">[</span><span class="fit" id="f259" style="transform:scaleX(0.7541);margin-right:-29.31px">メディアオブジェクト</span><span class="fit" id="f260" style="transform:scaleX(0.9312);margin-right:-0.23px">]</span></div></div>
<div class="obj g" style="left:840px;width:210px"><div class="t"><span class="fit" id="f261" style="transform:scaleX(0.8705);margin-right:-3.11px">座標</span><span class="fit" id="f262" style="transform:scaleX(0.9312);margin-right:-0.23px">[</span><span class="fit" id="f263" style="transform:scaleX(0.7541);margin-right:-29.31px">メディアオブジェクト</span><span class="fit" id="f264" style="transform:scaleX(0.9312);margin-right:-0.23px">]</span></div></div>
</div>
<div class="row" style="top:290px;overflow:hidden">
<div class="sep"></div>
<div class="obj g" style="left:0px;width:390px"><div class="t"><span class="fit" id="f265" style="transform:scaleX(0.8705);margin-right:-3.11px">回転</span><span class="fit" id="f266" style="transform:scaleX(0.9312);margin-right:-0.23px">[</span><span class="fit" id="f267" style="transform:scaleX(0.7541);margin-right:-29.31px">メディアオブジェクト</span><span class="fit" id="f268" style="transform:scaleX(0.9312);margin-right:-0.23px">]</span></div></div>
<div class="obj g" style="left:390px;width:160px"><div class="t"><span class="fit" id="f269" style="transform:scaleX(0.8705);margin-right:-3.11px">回転</span><span class="fit" id="f270" style="transform:scaleX(0.9312);margin-right:-0.23px">[</span><span class="fit" id="f271" style="transform:scaleX(0.7541);margin-right:-29.31px">メディアオブジェクト</span><span class="fit" id="f272" style="transform:scaleX(0.9312);margin-right:-0.23px">]</span></div></div>
<div class="obj g" style="left:820px;width:230px"><div class="t"><span class="fit" id="f273" style="transform:scaleX(0.8705);margin-right:-3.11px">回転</span><span class="fit" id="f274" style="transform:scaleX(0.9312);margin-right:-0.23px">[</span><span class="fit" id="f275" style="transform:scaleX(0.7541);margin-right:-29.31px">メディアオブジェクト</span><span class="fit" id="f276" style="transform:scaleX(0.9312);margin-right:-0.23px">]</span></div></div>
</div>
<div class="row" style="top:321px;overflow:hidden">
<div class="sep"></div>
<div class="obj g" style="left:0px;width:1050px"><div class="t"><span class="fit" id="f277" style="transform:scaleX(0.8877);margin-right:-1.35px">震</span><span class="fit" id="f278" style="transform:scaleX(0.7690);margin-right:-5.46px">える</span><span class="fit" id="f279" style="transform:scaleX(0.9497);margin-right:-0.20px">(</span><span class="fit" id="f280" style="transform:scaleX(0.7690);margin-right:-19.29px">アニメーション</span><span class="fit" id="f281" style="transform:scaleX(0.8877);margin-right:-2.70px">効果</span><span class="fit" id="f282" style="transform:scaleX(0.9497);margin-right:-0.20px">)</span></div></div>
</div>
<div class="row" style="top:352px;overflow:hidden">
<div class="sep"></div>
<div style="left:0;top:-1px;width:1px;height:30px;background:#000"></div>
<div class="obj g" style="left:730px;width:210px"><div class="t"><span class="fit" id="f283" style="transform:scaleX(0.8575);margin-right:-3.42px">放射</span><span class="fit" id="f284" style="transform:scaleX(0.7428);margin-right:-9.26px">ブラー</span><span class="fit" id="f285" style="transform:scaleX(0.9173);margin-right:-0.28px">[</span><span class="fit" id="f286" style="transform:scaleX(0.7428);margin-right:-30.65px">メディアオブジェクト</span><span class="fit" id="f287" style="transform:scaleX(0.9173);margin-right:-0.28px">]</span></div></div>
</div>
<div class="row" style="top:383px;overflow:hidden">
<div class="sep"></div>
<div style="left:0;top:-1px;width:1px;height:30px;background:#000"></div>
<div class="obj b" style="left:730px;width:150px"><div class="t"><span class="fit" id="f288" style="transform:scaleX(0.9868);margin-right:-0.16px">円</span><span class="fit" id="f289" style="transform:scaleX(1.0556);margin-right:0.22px">(</span><span class="fit" id="f290" style="transform:scaleX(0.9868);margin-right:-0.32px">図形</span><span class="fit" id="f291" style="transform:scaleX(1.0556);margin-right:0.22px">)</span></div></div>
</div>
<div class="row" style="top:414px;overflow:hidden">
<div class="sep"></div>
<div style="left:0;top:-1px;width:1px;height:30px;background:#000"></div>
<div class="obj b" style="left:750px;width:150px"><div class="t"><span class="fit" id="f292" style="transform:scaleX(0.9868);margin-right:-0.16px">円</span><span class="fit" id="f293" style="transform:scaleX(1.0556);margin-right:0.22px">(</span><span class="fit" id="f294" style="transform:scaleX(0.9868);margin-right:-0.32px">図形</span><span class="fit" id="f295" style="transform:scaleX(1.0556);margin-right:0.22px">)</span></div></div>
</div>
<div class="row" style="top:445px;overflow:hidden">
<div class="sep"></div>
<div style="left:0;top:-1px;width:1px;height:30px;background:#000"></div>
</div>
<div class="row" style="top:476px;overflow:hidden">
<div class="sep"></div>
<div style="left:0;top:-1px;width:1px;height:30px;background:#000"></div>
</div>
<div class="row" style="top:507px;overflow:hidden">
<div class="sep"></div>
<div style="left:0;top:-1px;width:1px;height:30px;background:#000"></div>
</div>
<div class="row" style="top:538px;overflow:hidden">
<div class="sep"></div>
<div style="left:0;top:-1px;width:1px;height:30px;background:#000"></div>
</div>
<div style="left:894px;top:43px;width:1px;height:524px;background:#ff0000"></div>
<div style="left:894px;top:66px;width:1px;height:7px;background:#00ffff"></div>
<div style="left:895px;top:70px;width:9px;height:2px;background:#ff0000"></div>
<div style="left:894px;top:79px;width:1px;height:23px;background:#00e078"></div>
<div style="left:894px;top:103px;width:1px;height:1px;background:#00c8c8"></div>
<div style="left:894px;top:110px;width:1px;height:23px;background:#00e078"></div>
<div style="left:894px;top:134px;width:1px;height:1px;background:#00c8c8"></div>
<div style="left:894px;top:141px;width:1px;height:23px;background:#00e078"></div>
<div style="left:894px;top:165px;width:1px;height:1px;background:#00c8c8"></div>
<div style="left:894px;top:172px;width:1px;height:23px;background:#00e078"></div>
<div style="left:894px;top:196px;width:1px;height:1px;background:#00c8c8"></div>
<div style="left:894px;top:203px;width:1px;height:23px;background:#00e078"></div>
<div style="left:894px;top:227px;width:1px;height:1px;background:#00c8c8"></div>
<div style="left:894px;top:234px;width:1px;height:23px;background:#00e078"></div>
<div style="left:894px;top:258px;width:1px;height:1px;background:#00c8c8"></div>
<div style="left:894px;top:265px;width:1px;height:23px;background:#0a5a5a"></div>
<div style="left:894px;top:289px;width:1px;height:1px;background:#00c8c8"></div>
<div style="left:894px;top:296px;width:1px;height:23px;background:#0a5a5a"></div>
<div style="left:894px;top:320px;width:1px;height:1px;background:#00c8c8"></div>
<div style="left:894px;top:327px;width:1px;height:23px;background:#0a5a5a"></div>
<div style="left:894px;top:351px;width:1px;height:1px;background:#00c8c8"></div>
<div style="left:894px;top:358px;width:1px;height:23px;background:#0a5a5a"></div>
<div style="left:894px;top:382px;width:1px;height:1px;background:#00c8c8"></div>
<div style="left:894px;top:389px;width:1px;height:23px;background:#00e078"></div>
<div style="left:894px;top:413px;width:1px;height:1px;background:#00c8c8"></div>
<div style="left:894px;top:420px;width:1px;height:23px;background:#00e078"></div>
<div style="left:894px;top:444px;width:1px;height:1px;background:#00c8c8"></div>
<div style="left:894px;top:475px;width:1px;height:1px;background:#00c8c8"></div>
<div style="left:894px;top:506px;width:1px;height:1px;background:#00c8c8"></div>
<div style="left:894px;top:537px;width:1px;height:1px;background:#00c8c8"></div>
<div style="left:894px;top:568px;width:1px;height:1px;background:#00c8c8"></div>
</div>
</body></html>
